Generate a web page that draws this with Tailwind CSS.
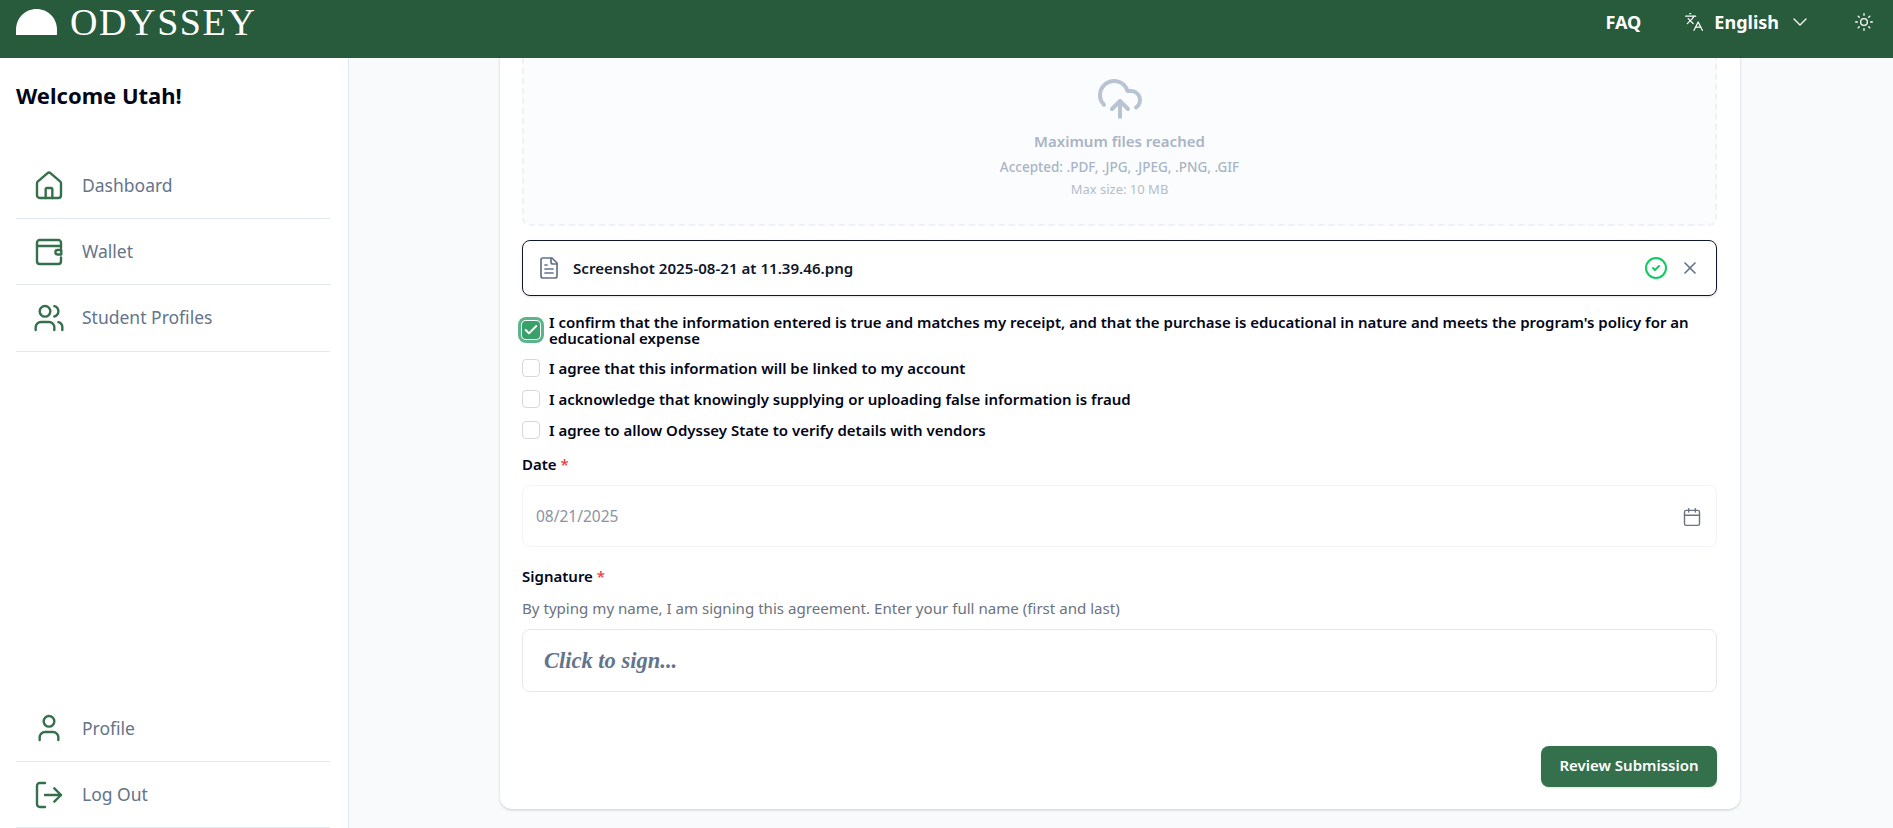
<!DOCTYPE html>
<html lang="en">
<head>
<meta charset="utf-8">
<title>Odyssey</title>
<script src="https://cdn.jsdelivr.net/npm/@tailwindcss/browser@4"></script>
</head>
<body class="h-[828px] overflow-hidden bg-white font-['Noto_Sans',sans-serif]">
<header class="h-[58px] bg-[#285a3c] flex items-start justify-between text-white">
  <div class="flex items-start pl-4 pt-[9px]">
    <svg class="w-[41px] h-[26px]" viewBox="0 0 41 26"><path fill="#fff" d="M0 26V21C0 9 9 0 20.5 0S41 9 41 21v5z"/></svg>
    <span class="ml-[13px] font-['Liberation_Serif',serif] text-[38px] leading-[26px] tracking-[1.6px]">ODYSSEY</span>
  </div>
  <div class="flex items-center h-[43px] pr-[19px]">
    <span class="text-[18px] font-bold leading-none">FAQ</span>
    <svg class="ml-[43px] w-5 h-5" viewBox="0 0 24 24" fill="none" stroke="currentColor" stroke-width="1.5" stroke-linecap="round" stroke-linejoin="round"><path d="m5 8 6 6"/><path d="m4 14 6-6 2-3"/><path d="M2 5h12"/><path d="M7 2h1"/><path d="m22 22-5-10-5 10"/><path d="M14 18h6"/></svg>
    <span class="ml-[10px] text-[18px] font-bold leading-none">English</span>
    <svg class="ml-[9px] w-6 h-6" viewBox="0 0 24 24" fill="none" stroke="currentColor" stroke-width="1.3" stroke-linecap="round" stroke-linejoin="round"><path d="m6 9 6 6 6-6"/></svg>
    <svg class="ml-[42px] w-5 h-5" viewBox="0 0 24 24" fill="none" stroke="currentColor" stroke-width="1.6" stroke-linecap="round" stroke-linejoin="round"><circle cx="12" cy="12" r="4"/><path d="M12 2v2"/><path d="M12 20v2"/><path d="m4.93 4.93 1.41 1.41"/><path d="m17.66 17.66 1.41 1.41"/><path d="M2 12h2"/><path d="M20 12h2"/><path d="m6.34 17.66-1.41 1.41"/><path d="m19.07 4.93-1.41 1.41"/></svg>
  </div>
</header>
<div class="flex h-[770px]">
  <aside class="w-[349px] shrink-0 border-r border-[#e2e8f0] bg-white pl-4 pr-[18px] flex flex-col">
    <h1 class="mt-[23px] text-[22px] leading-7 font-bold text-[#020617]">Welcome Utah!</h1>
    <nav class="mt-[44px] flex flex-col text-[17.5px] text-[#64748b]">
      <a class="h-[66px] border-b border-[#e2e8f0] flex items-center pl-[17px] gap-[17px]">
        <svg class="w-8 h-8 text-[#35704c]" viewBox="0 0 24 24" fill="none" stroke="currentColor" stroke-width="1.8" stroke-linecap="round" stroke-linejoin="round"><path d="M14.5 21v-6.5a1 1 0 0 0-1-1h-3a1 1 0 0 0-1 1V21"/><path d="M3 10a2 2 0 0 1 .709-1.528l7-5.999a2 2 0 0 1 2.582 0l7 5.999A2 2 0 0 1 21 10v9a2 2 0 0 1-2 2H5a2 2 0 0 1-2-2z"/></svg>
        Dashboard
      </a>
      <a class="h-[66px] border-b border-[#e2e8f0] flex items-center pl-[17px] gap-[17px]">
        <svg class="w-8 h-8 text-[#35704c]" viewBox="0 0 24 24" fill="none" stroke="currentColor" stroke-width="1.8" stroke-linecap="round" stroke-linejoin="round"><path d="M21 9V5a2 2 0 0 0-2-2H5a2 2 0 0 0-2 2v14a2 2 0 0 0 2 2h14a2 2 0 0 0 2-2v-3"/><path d="M3 7.5h18"/><path d="M21.2 10.5H18.5a1.7 1.7 0 0 0 0 3.4h2.7z"/></svg>
        Wallet
      </a>
      <a class="h-[67px] pb-px border-b border-[#e2e8f0] flex items-center pl-[17px] gap-[17px]">
        <svg class="w-8 h-8 text-[#35704c]" viewBox="0 0 24 24" fill="none" stroke="currentColor" stroke-width="1.8" stroke-linecap="round" stroke-linejoin="round"><path d="M16 21v-2a4 4 0 0 0-4-4H6a4 4 0 0 0-4 4v2"/><circle cx="9" cy="7" r="4"/><path d="M22 21v-2a4 4 0 0 0-3-3.87"/><path d="M16 3.13a4 4 0 0 1 0 7.75"/></svg>
        Student Profiles
      </a>
    </nav>
    <nav class="mt-auto flex flex-col text-[17.5px] text-[#64748b]">
      <a class="h-[66px] pb-px border-b border-[#e2e8f0] flex items-center pl-[17px] gap-[17px]">
        <svg class="w-8 h-8 text-[#35704c]" viewBox="0 0 24 24" fill="none" stroke="currentColor" stroke-width="1.8" stroke-linecap="round" stroke-linejoin="round"><path d="M19 21v-2a4 4 0 0 0-4-4H9a4 4 0 0 0-4 4v2"/><circle cx="12" cy="7" r="4"/></svg>
        Profile
      </a>
      <a class="h-[66px] border-b border-[#e2e8f0] flex items-center pl-[17px] gap-[17px]">
        <svg class="w-8 h-8 text-[#35704c]" viewBox="0 0 24 24" fill="none" stroke="currentColor" stroke-width="1.8" stroke-linecap="round" stroke-linejoin="round"><path d="m16 17 5-5-5-5"/><path d="M21 12H9"/><path d="M9 21H5a2 2 0 0 1-2-2V5a2 2 0 0 1 2-2h4"/></svg>
        Log Out
      </a>
    </nav>
  </aside>
  <main class="flex-1 bg-[#f9fafb] overflow-hidden flex flex-col items-center justify-end pb-[19px] pr-[2px]">
    <section class="w-[1240px] shrink-0 bg-white rounded-xl shadow-[0_1px_3px_rgba(30,50,90,0.22)] pl-[22px] pr-[23px] pb-[22px]">
      <div class="h-[190px] bg-[#fbfcfe] border-2 border-dashed border-[#eef1f6] rounded-lg flex flex-col items-center">
        <svg class="mt-[37px] w-12 h-12 text-[#b9c4d3]" viewBox="0 0 24 24" fill="none" stroke="currentColor" stroke-width="2" stroke-linecap="round" stroke-linejoin="round"><path d="M12 13v8"/><path d="M4 14.899A7 7 0 1 1 15.71 8h1.79a4.5 4.5 0 0 1 2.5 8.242"/><path d="m8 17 4-4 4 4"/></svg>
        <p class="mt-[8px] text-[15px] leading-5 font-semibold text-[#a9b4c4]">Maximum files reached</p>
        <p class="mt-[6px] text-[13.5px] leading-5 font-medium text-[#a9b4c4]">Accepted: .PDF, .JPG, .JPEG, .PNG, .GIF</p>
        <p class="mt-[2px] text-[13px] leading-5 text-[#b4bdca]">Max size: 10 MB</p>
      </div>
      <div class="mt-[14px] h-[56px] border border-[#0f172a] rounded-lg shadow-sm flex items-center pl-[14px] pr-[16px]">
        <svg class="w-6 h-6 text-[#64748b]" viewBox="0 0 24 24" fill="none" stroke="currentColor" stroke-width="1.7" stroke-linecap="round" stroke-linejoin="round"><path d="M15 2H6a2 2 0 0 0-2 2v16a2 2 0 0 0 2 2h12a2 2 0 0 0 2-2V7Z"/><path d="M14 2v4a2 2 0 0 0 2 2h4"/><path d="M10 9H8"/><path d="M16 13H8"/><path d="M16 17H8"/></svg>
        <span class="ml-3 text-[15.1px] font-semibold text-[#0f172a]">Screenshot 2025-08-21 at 11.39.46.png</span>
        <svg class="ml-auto w-6 h-6 text-[#10cb62]" viewBox="0 0 24 24" fill="none" stroke="currentColor" stroke-width="2" stroke-linecap="round" stroke-linejoin="round"><circle cx="12" cy="12" r="10"/><path d="m9 12 2 2 4-4"/></svg>
        <svg class="ml-[12px] w-5 h-5 text-[#64748b]" viewBox="0 0 24 24" fill="none" stroke="currentColor" stroke-width="2" stroke-linecap="round" stroke-linejoin="round"><path d="M18 6 6 18"/><path d="m6 6 12 12"/></svg>
      </div>
      <div class="mt-[18px] flex flex-col gap-[13px] text-[15px] leading-4 font-semibold text-[#020617]">
        <label class="flex items-center gap-[9px]">
          <span class="w-[18px] h-[18px] shrink-0 rounded-[4px] bg-[#38a169] ring-[3px] ring-[#5cb48a] ring-offset-1 flex items-center justify-center">
            <svg class="w-4 h-4 text-white" viewBox="0 0 24 24" fill="none" stroke="currentColor" stroke-width="3" stroke-linecap="round" stroke-linejoin="round"><path d="M20 6 9 17l-5-5"/></svg>
          </span>
          <span>I confirm that the information entered is true and matches my receipt, and that the purchase is educational in nature and meets the program's policy for an educational expense</span>
        </label>
        <label class="flex items-center gap-[9px]"><span class="w-[18px] h-[18px] shrink-0 rounded-[4px] border border-[#d4d7dd]"></span><span>I agree that this information will be linked to my account</span></label>
        <label class="flex items-center gap-[9px]"><span class="w-[18px] h-[18px] shrink-0 rounded-[4px] border border-[#d4d7dd]"></span><span>I acknowledge that knowingly supplying or uploading false information is fraud</span></label>
        <label class="flex items-center gap-[9px]"><span class="w-[18px] h-[18px] shrink-0 rounded-[4px] border border-[#d4d7dd]"></span><span>I agree to allow Odyssey State to verify details with vendors</span></label>
      </div>
      <p class="mt-[15px] text-[15px] leading-5 font-semibold text-[#020617]">Date <span class="text-[#ef4444]">*</span></p>
      <div class="mt-[11px] h-[62px] pt-[2px] border border-[#f1f3f6] rounded-lg flex items-center justify-between pl-[13px] pr-[14px] text-[15.5px] text-[#8b93a1]">
        <span>08/21/2025</span>
        <svg class="w-5 h-5 text-[#6b7280]" viewBox="0 0 24 24" fill="none" stroke="currentColor" stroke-width="1.7" stroke-linecap="round" stroke-linejoin="round"><path d="M8 2v4"/><path d="M16 2v4"/><rect x="3" y="4" width="18" height="18" rx="2"/><path d="M3 10h18"/></svg>
      </div>
      <p class="mt-[19px] text-[15px] leading-5 font-semibold text-[#020617]">Signature <span class="text-[#ef4444]">*</span></p>
      <p class="mt-[12px] text-[15.1px] leading-5 text-[#6b7280]">By typing my name, I am signing this agreement. Enter your full name (first and last)</p>
      <div class="mt-[11px] h-[63px] border border-[#e5e7f0] rounded-lg flex items-center pl-[21px] font-['Liberation_Serif',serif] italic font-bold text-[22.5px] text-[#64748b]">Click to sign...</div>
      <div class="mt-[54px] flex justify-end">
        <button class="h-[41px] w-[176px] pb-[2px] rounded-lg bg-[#35704c] shadow-sm text-[15px] font-semibold text-white">Review Submission</button>
      </div>
    </section>
  </main>
</div>
</body>
</html>
